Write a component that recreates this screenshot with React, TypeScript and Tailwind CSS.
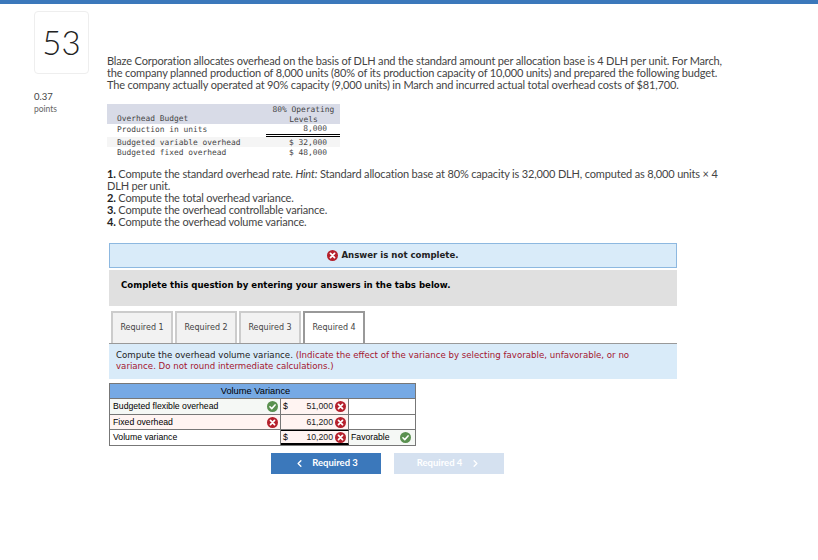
import React from 'react';
import { ChevronLeft, ChevronRight } from 'lucide-react';

const XIcon = ({ className = '' }: { className?: string }) => (
  <svg viewBox="0 0 12 12" className={`h-[11px] w-[11px] shrink-0 ${className}`}>
    <circle cx="6" cy="6" r="6" fill="#b5202c" />
    <path d="M3.8 3.8l4.4 4.4M8.2 3.8l-4.4 4.4" stroke="#fff" strokeWidth="1.9" strokeLinecap="round" />
  </svg>
);

const CheckIcon = ({ className = '' }: { className?: string }) => (
  <svg viewBox="0 0 12 12" className={`h-[11px] w-[11px] shrink-0 ${className}`}>
    <circle cx="6" cy="6" r="6" fill="#5a9150" />
    <path d="M3.2 6.3l2 2 3.6-4" stroke="#fff" strokeWidth="1.7" fill="none" strokeLinecap="round" strokeLinejoin="round" />
  </svg>
);

const BudgetTable = () => (
  <div className="mt-[13px] w-[233px] font-['DejaVu_Sans_Mono',monospace] text-[7.9px] leading-[10px] text-[#444]">
    <div className="flex h-5 bg-[#d8dbe7]">
      <div className="flex-1 pl-[10px] pt-[10px]">Overhead Budget</div>
      <div className="w-[74px] pl-[1px] pt-[1px] text-center">80% Operating<br />Levels</div>
    </div>
    <div className="flex h-[13px]">
      <div className="flex-1 pl-[10px] pt-[1px]">Production in units</div>
      <div className="h-[13px] w-[74px] border-b-[3px] border-double border-black pr-[13px] text-right">8,000</div>
    </div>
    <div className="flex h-[10px] bg-[#f5f5f5] pt-[1px]">
      <div className="flex-1 pl-[10px]">Budgeted variable overhead</div>
      <div className="w-[74px] pr-[13px] text-right">$ 32,000</div>
    </div>
    <div className="flex h-[10px] pt-[1px]">
      <div className="flex-1 pl-[10px]">Budgeted fixed overhead</div>
      <div className="w-[74px] pr-[13px] text-right">$ 48,000</div>
    </div>
  </div>
);

const Tab = ({ label, active }: { label: string; active?: boolean }) => (
  <div
    className={`flex h-[32px] w-[62px] items-center justify-center border-2 border-b-0 text-[8px] text-[#444] ${
      active ? 'border-[#999] bg-white' : 'border-[#ccc] bg-[#f2f2f2]'
    }`}
  >
    {label}
  </div>
);

const VarianceTable = () => (
  <div className="mt-1 w-[307px] border border-[#777] font-['Liberation_Sans',sans-serif] text-[8.7px] leading-none text-black">
    <div className="flex h-[15px] items-center justify-center border-b border-[#777] bg-[#76a9e4] pr-[14px] pt-[1px] text-[9.3px]">Volume Variance</div>
    <div className="flex h-4 border-b border-[#777]">
      <div className="flex w-[171px] items-center justify-between border-r border-[#777] bg-[#f5f8f5] pl-[3px] pr-[2px]">
        Budgeted flexible overhead <CheckIcon />
      </div>
      <div className="flex w-[68px] items-center justify-between border-r border-[#777] bg-[#fff4f2] pl-[2px] pr-[2px]">
        <span>$</span>
        <span className="flex items-center gap-[2px] text-[#222]">51,000 <XIcon /></span>
      </div>
    </div>
    <div className="flex h-[15px] border-b border-[#777]">
      <div className="flex w-[171px] items-center justify-between border-r border-[#777] bg-[#fff4f2] pl-[3px] pr-[2px]">
        Fixed overhead <XIcon />
      </div>
      <div className="flex w-[68px] items-center justify-end border-r border-[#777] bg-[#fff4f2] pr-[2px]">
        <span className="flex items-center gap-[2px] text-[#222]">61,200 <XIcon /></span>
      </div>
    </div>
    <div className="flex h-[15px]">
      <div className="flex w-[171px] items-center border-r border-[#777] pl-[3px]">Volume variance</div>
      <div className="flex w-[68px] items-center justify-between border-b-2 border-r border-t border-b-black border-r-[#777] border-t-black bg-[#fff4f2] pl-[2px] pr-[2px]">
        <span>$</span>
        <span className="flex items-center gap-[2px] text-[#222]">10,200 <XIcon /></span>
      </div>
      <div className="flex flex-1 items-center justify-between bg-[#f5f8f5] pl-[2px] pr-[4px]">
        Favorable <CheckIcon />
      </div>
    </div>
  </div>
);

export default function App() {
  return (
    <div className="h-[560px] w-[818px] overflow-hidden bg-white">
      <div className="h-1 bg-[#3b78bb]" />
      <div className="flex pl-[34px] pt-[7px]">
        <div className="w-[73px]">
          <div className="flex h-[63px] w-[55px] items-center justify-center rounded border border-[#eee] font-['Lato',sans-serif] text-[33px] font-light text-[#222]">
            53
          </div>
          <div className="mt-[17px] font-['Lato',sans-serif] text-[9.5px] leading-[12px] text-[#444]">0.37</div>
          <div className="font-['Lato',sans-serif] text-[8.5px] leading-[12px] text-[#666]">points</div>
        </div>
        <div className="flex-1 pt-[44px]">
          <div className="font-['Lato',sans-serif] text-[11px] leading-[12px] tracking-[-0.165px] text-[#444]">
            <p>
              Blaze Corporation allocates overhead on the basis of DLH and the standard amount per allocation base is 4 DLH per unit. For March,<br />
              the company planned production of 8,000 units (80% of its production capacity of 10,000 units) and prepared the following budget.<br />
              The company actually operated at 90% capacity (9,000 units) in March and incurred actual total overhead costs of $81,700.
            </p>
          </div>
          <BudgetTable />
          <div className="mt-[11px] font-['Lato',sans-serif] text-[11px] leading-[12px] tracking-[-0.165px] text-[#444]">
            <p><b className="text-[#222]">1.</b> Compute the standard overhead rate. <i>Hint:</i> Standard allocation base at 80% capacity is 32,000 DLH, computed as 8,000 units × 4<br />DLH per unit.</p>
            <p><b className="text-[#222]">2.</b> Compute the total overhead variance.</p>
            <p><b className="text-[#222]">3.</b> Compute the overhead controllable variance.</p>
            <p><b className="text-[#222]">4.</b> Compute the overhead volume variance.</p>
          </div>

          <div className="ml-[2px] mt-[15px] w-[568px] font-['DejaVu_Sans',sans-serif]">
            <div className="flex h-[25px] items-center justify-center gap-[3px] border border-[#8db8e0] bg-[#d9ebf9] text-[8.6px] font-bold text-[#222]">
              <XIcon /> Answer is not complete.
            </div>
            <div className="mt-[2px] flex h-9 items-center bg-[#e0e0e0] pb-[6px] pl-3 text-[8.6px] font-bold text-black">
              Complete this question by entering your answers in the tabs below.
            </div>
            <div className="mt-[5px] flex gap-[2px] pl-[2px]">
              <Tab label="Required 1" />
              <Tab label="Required 2" />
              <Tab label="Required 3" />
              <Tab label="Required 4" active />
            </div>
            <div className="h-[36px] border-t border-[#999] bg-[#d9ebf9] px-[7px] pt-[6px] text-[8.65px] leading-[11px] text-[#222]">
              Compute the overhead volume variance. <span className="text-[#a4152f]">(Indicate the effect of the variance by selecting favorable, unfavorable, or no<br />variance. Do not round intermediate calculations.)</span>
            </div>
            <VarianceTable />
            <div className="mt-[7px] flex gap-[13px] pl-[162px] font-['Lato',sans-serif] text-[9.5px] font-bold text-white">
              <div className="flex h-[21px] w-[110px] items-center justify-center gap-[7px] bg-[#3b78bb]">
                <ChevronLeft size={11} strokeWidth={3} /> Required 3
              </div>
              <div className="flex h-[21px] w-[110px] items-center justify-center gap-2 bg-[#d5e1f0]">
                Required 4 <ChevronRight size={11} strokeWidth={3} />
              </div>
            </div>
          </div>
        </div>
      </div>
    </div>
  );
}
